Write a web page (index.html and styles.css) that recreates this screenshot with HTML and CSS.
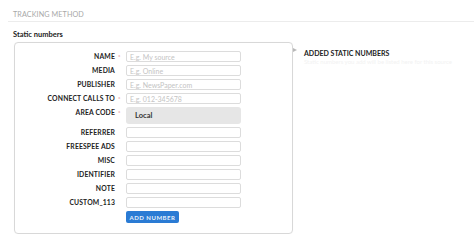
FILE: index.html
```html
<!DOCTYPE html>
<html>
<head>
<meta charset="utf-8">
<link rel="stylesheet" href="styles.css">
</head>
<body>
<div class="page">
  <div class="section-head">TRACKING METHOD</div>
  <div class="sub-title">Static numbers</div>
  <div class="content">
    <div class="form-box">
      <div class="form-grid">
        <label class="lbl">NAME</label><span class="star">*</span><input class="inp" placeholder="E.g. My source">
        <label class="lbl">MEDIA</label><span class="star"></span><input class="inp" placeholder="E.g. Online">
        <label class="lbl">PUBLISHER</label><span class="star"></span><input class="inp" placeholder="E.g. NewsPaper.com">
        <label class="lbl">CONNECT CALLS TO</label><span class="star">*</span><input class="inp" placeholder="E.g. 012-345678">
        <label class="lbl lbl-top">AREA CODE</label><span class="star star-top">*</span><div class="select">Local</div>
        <label class="lbl">REFERRER</label><span class="star"></span><input class="inp">
        <label class="lbl">FREESPEE ADS</label><span class="star"></span><input class="inp">
        <label class="lbl">MISC</label><span class="star"></span><input class="inp">
        <label class="lbl">IDENTIFIER</label><span class="star"></span><input class="inp">
        <label class="lbl">NOTE</label><span class="star"></span><input class="inp">
        <label class="lbl">CUSTOM_113</label><span class="star"></span><input class="inp">
        <span></span><span></span><div class="btn-cell"><button class="btn">ADD NUMBER</button></div>
      </div>
    </div>
    <div class="side">
      <div class="side-row">
        <span class="arrow"></span>
        <div>
          <div class="side-title">ADDED STATIC NUMBERS</div>
          <div class="side-note">Static numbers you add will be listed here for this source</div>
        </div>
      </div>
    </div>
  </div>
</div>
</body>
</html>
```
FILE: styles.css
```css
html, body {
  margin: 0;
  padding: 0;
  background: #fff;
}
body {
  font-family: Lato, "Liberation Sans", Arial, sans-serif;
  color: #333;
}
.page {
  padding: 10px 0 0 8px;
}
.section-head {
  font-size: 7.2px;
  color: #a8a8a8;
  letter-spacing: 0.1px;
  padding: 1px 0 3px 5px;
  border-bottom: 1px solid #ececec;
  line-height: 7px;
}
.sub-title {
  font-size: 7.5px;
  font-weight: 700;
  color: #222;
  padding: 8px 0 0 5px;
  line-height: 9px;
}
.content {
  display: flex;
  align-items: flex-start;
  margin-top: 3px;
}
.form-box {
  margin-left: 6px;
  width: 277px;
  border: 1px solid #d8d8d8;
  border-radius: 4px;
  padding: 8px 0 10px 0;
  box-shadow: 0 0 1px rgba(0,0,0,0.05);
}
.form-grid {
  display: grid;
  grid-template-columns: 100px 11px 115px;
  grid-template-rows: repeat(4, 11px) 17px repeat(6, 11px) 12px;
  row-gap: 3px;
  align-items: center;
  line-height: 11px;
}
.lbl {
  height: 11px;
  font-size: 6.8px;
  font-weight: 700;
  color: #222;
  text-align: right;
  white-space: nowrap;
  letter-spacing: 0.15px;
}
.star {
  height: 11px;
  color: #e36a6a;
  font-size: 6px;
  padding-left: 3px;
}
.inp {
  box-sizing: border-box;
  height: 11px;
  width: 115px;
  margin: 0;
  padding: 0 0 0 3px;
  border: 1px solid #dcdcdc;
  border-radius: 2px;
  font-family: Lato, "Liberation Sans", Arial, sans-serif;
  font-size: 7px;
  color: #333;
  background: #fff;
}
.inp::placeholder {
  color: #c4c4c4;
}
.select {
  box-sizing: border-box;
  height: 17px;
  width: 115px;
  background: #e6e6e6;
  border-radius: 3px;
  font-size: 7.5px;
  font-weight: 700;
  color: #333;
  padding-left: 9px;
  line-height: 17px;
}
.lbl-top, .star-top {
  align-self: start;
}
.btn-cell {
  display: flex;
  align-items: flex-start;
  height: 12px;
}
.btn {
  height: 12px;
  width: 53px;
  padding: 0;
  border: none;
  border-radius: 2px;
  background: #2a7bd4;
  color: #e8f1fb;
  font-family: Lato, "Liberation Sans", Arial, sans-serif;
  font-size: 6px;
  font-weight: 700;
  letter-spacing: 0.5px;
}
.side {
  padding-top: 5px;
}
.side-row {
  display: flex;
  align-items: flex-start;
}
.arrow {
  width: 0;
  height: 0;
  border-top: 2.5px solid transparent;
  border-bottom: 2.5px solid transparent;
  border-left: 4px solid #b8b8b8;
  margin: 1px 7px 0 0;
}
.side-title {
  font-size: 7px;
  font-weight: 700;
  color: #222;
  line-height: 9px;
  margin-top: 2px;
}
.side-note {
  font-size: 6px;
  color: #f2f2f2;
  line-height: 8px;
}
```
